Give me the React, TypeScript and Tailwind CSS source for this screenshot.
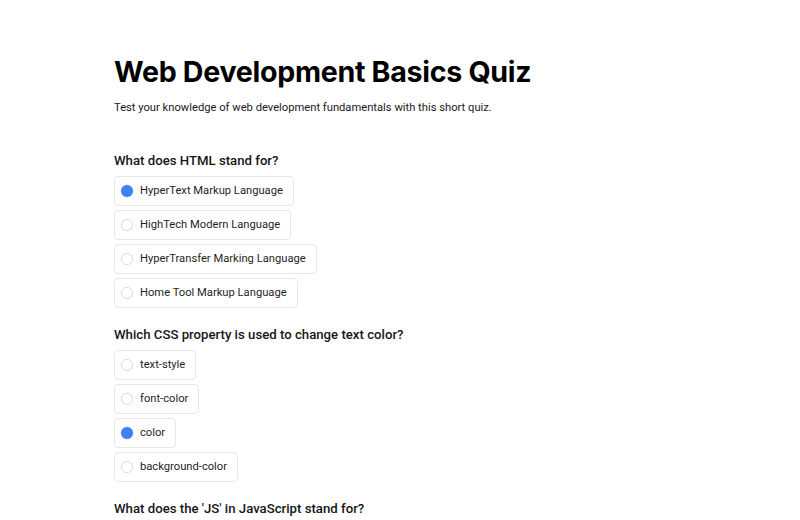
import React, { useState } from "react";

const questions = [
  {
    q: "What does HTML stand for?",
    options: [
      "HyperText Markup Language",
      "HighTech Modern Language",
      "HyperTransfer Marking Language",
      "Home Tool Markup Language",
    ],
    selected: 0,
  },
  {
    q: "Which CSS property is used to change text color?",
    options: ["text-style", "font-color", "color", "background-color"],
    selected: 2,
  },
  {
    q: "What does the 'JS' in JavaScript stand for?",
    options: ["Java Source", "JavaScript", "Just Script", "Java Syntax"],
    selected: -1,
  },
];

export default function App() {
  const [sel, setSel] = useState<number[]>(questions.map((q) => q.selected));
  return (
    <div
      className="min-h-screen bg-white text-[#111] pl-[114px] pt-[54px]"
      style={{ fontFamily: "Roboto, 'Noto Sans', sans-serif" }}
    >
      <h1
        className="text-[28.6px] leading-9 font-bold tracking-[-0.3px] text-black"
        style={{ fontFamily: "Inter, Roboto, sans-serif" }}
      >
        Web Development Basics Quiz
      </h1>
      <p className="mt-[10px] text-[11.2px] leading-4 text-[#1a1a1a]">
        Test your knowledge of web development fundamentals with this short quiz.
      </p>
      <div className="mt-[35px] flex flex-col gap-[17px]">
        {questions.map((item, qi) => (
          <div key={qi}>
            <h2 className="text-[13.2px] leading-5 font-medium text-[#161616]">{item.q}</h2>
            <div className="mt-[5px] flex flex-col items-start gap-[4px]">
              {item.options.map((opt, oi) => {
                const checked = sel[qi] === oi;
                return (
                  <label
                    key={oi}
                    onClick={() =>
                      setSel((s) => s.map((v, i) => (i === qi ? oi : v)))
                    }
                    className="flex h-[30px] items-center gap-[7px] rounded-[4px] border border-[#e5e7eb] bg-white pl-[6px] pr-[10px] cursor-pointer"
                  >
                    {checked ? (
                      <span className="block h-[12px] w-[12px] rounded-full bg-[#3b82f6] shadow-[0_0_2px_rgba(59,130,246,0.4)]" />
                    ) : (
                      <span className="block h-[12px] w-[12px] rounded-full border border-[#dcdfe4] bg-white shadow-[0_0_1px_rgba(0,0,0,0.08)]" />
                    )}
                    <span className="text-[11.2px] leading-4 text-[#1f1f1f]">{opt}</span>
                  </label>
                );
              })}
            </div>
          </div>
        ))}
      </div>
    </div>
  );
}
